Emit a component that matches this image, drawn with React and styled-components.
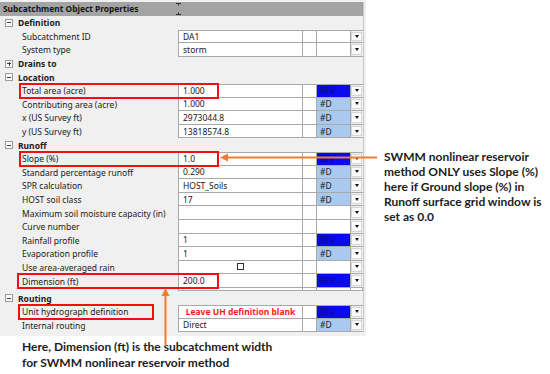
import React from "react";
import styled, { createGlobalStyle } from "styled-components";

const ROW = 13.6;
const LINE = "#a9a9a9";

const GlobalStyle = createGlobalStyle`
  html, body {
    margin: 0;
    padding: 0;
    background: #ffffff;
  }
`;

const Page = styled.div`
  position: relative;
  width: 550px;
  height: 374px;
  overflow: hidden;
  font-family: "Noto Sans", "Open Sans", sans-serif;
  color: #202020;
`;

const Top = styled.div`
  display: flex;
  align-items: flex-start;
`;

const Panel = styled.div`
  width: 366px;
  padding: 2px 0 4px;
  background: #f0f0f0;
  box-sizing: border-box;
`;

const Grid = styled.div`
  width: 364px;
  border-right: 1px solid #c8c8c8;
  box-sizing: border-box;
`;

const Header = styled.div`
  position: relative;
  height: 14px;
  line-height: 14px;
  padding-left: 3px;
  background: #a4a4a4;
  color: #151515;
  font-weight: bold;
  font-size: 8.4px;
`;

const Splitter = styled.svg`
  position: absolute;
  left: 175px;
  top: 0;
`;

const Row = styled.div`
  position: relative;
  display: flex;
  align-items: stretch;
  height: ${(p) => p.$h || ROW}px;
  font-size: 8.5px;
`;

const Label = styled.div`
  display: flex;
  align-items: center;
  width: 178px;
  flex-shrink: 0;
  padding-left: ${(p) => (p.$cat ? 5 : 22)}px;
  box-sizing: border-box;
  font-weight: ${(p) => (p.$cat ? "bold" : "normal")};
  white-space: nowrap;
`;

const Expander = styled.span`
  position: relative;
  display: inline-flex;
  align-items: center;
  justify-content: center;
  width: 8px;
  height: 8px;
  margin-right: 5px;
  box-sizing: border-box;
  border: 1px solid #9c9c9c;
  background: #fafafa;
  &::before {
    content: "";
    position: absolute;
    width: 4px;
    height: 1px;
    background: #404040;
  }
  &::after {
    content: ${(p) => (p.$plus ? '""' : "none")};
    position: absolute;
    width: 1px;
    height: 4px;
    background: #404040;
  }
`;

const Cells = styled.div`
  display: grid;
  grid-template-columns: 124px 14px 34px 12px;
  height: 100%;
  box-sizing: border-box;
  border-left: 1px solid ${LINE};
  border-bottom: 1px solid ${LINE};
  border-top: ${(p) => (p.$first ? `1px solid ${LINE}` : "none")};
`;

const Cell = styled.div`
  display: flex;
  align-items: center;
  justify-content: ${(p) => (p.$center ? "center" : "flex-start")};
  padding-left: ${(p) => (p.$center ? 0 : 4)}px;
  box-sizing: border-box;
  background: #ffffff;
  border-right: 1px solid ${LINE};
  color: ${(p) => (p.$warn ? "#ff1a1a" : "#202020")};
  font-weight: ${(p) => (p.$warn ? "bold" : "normal")};
  white-space: nowrap;
  overflow: hidden;
`;

const flagBg = { REV: "#0a0af0", "#D": "#a9c9ef" };

const Flag = styled(Cell)`
  background: ${(p) => flagBg[p.$kind] || "#ffffff"};
  color: ${(p) => (p.$kind === "REV" ? "#0a0a6e" : "#202020")};
  padding-left: 3px;
`;

const DropButton = styled.div`
  display: flex;
  align-items: center;
  justify-content: center;
  margin: 1px 1px 1px 0;
  background: #fbfbfb;
  box-shadow: inset 0 0 0 1px #d6d6d6;
  &::after {
    content: "";
    border-left: 2.5px solid transparent;
    border-right: 2.5px solid transparent;
    border-top: 3px solid #111111;
  }
`;

const CheckBox = styled.span`
  width: 7px;
  height: 7px;
  box-sizing: border-box;
  border: 1px solid #303030;
  background: #ffffff;
`;

const Highlight = styled.div`
  position: absolute;
  top: -1px;
  bottom: -1px;
  left: ${(p) => p.$left}px;
  width: ${(p) => p.$width}px;
  border: 2px solid #f01010;
  box-sizing: border-box;
  z-index: 2;
  pointer-events: none;
`;

const SideNote = styled.p`
  margin: 149px 0 0 18px;
  font-family: Lato, "Open Sans", sans-serif;
  font-weight: bold;
  font-size: 12px;
  line-height: 15px;
  color: #1c1c1c;
`;

const BottomNote = styled.p`
  margin: 3px 0 0 22px;
  font-family: Lato, "Open Sans", sans-serif;
  font-weight: bold;
  font-size: 12px;
  line-height: 16px;
  color: #1c1c1c;
`;

const Arrows = styled.svg`
  position: absolute;
  left: 0;
  top: 0;
  pointer-events: none;
  z-index: 3;
`;

const sections = [
  {
    title: "Definition",
    rows: [
      { label: "Subcatchment ID", value: "DA1" },
      { label: "System type", value: "storm" },
    ],
  },
  { title: "Drains to", collapsed: true, rows: [] },
  {
    title: "Location",
    rows: [
      { label: "Total area (acre)", value: "1.000", flag: "REV", hl: [19, 200] },
      { label: "Contributing area (acre)", value: "1.000", flag: "#D" },
      { label: "x (US Survey ft)", value: "2973044.8", flag: "#D" },
      { label: "y (US Survey ft)", value: "13818574.8", flag: "#D" },
    ],
  },
  {
    title: "Runoff",
    tail: true,
    rows: [
      { label: "Slope (%)", value: "1.0", flag: "REV", hl: [19, 200] },
      { label: "Standard percentage runoff", value: "0.290", flag: "#D" },
      { label: "SPR calculation", value: "HOST_Soils", flag: "#D" },
      { label: "HOST soil class", value: "17", flag: "#D" },
      { label: "Maximum soil moisture capacity (in)", value: "" },
      { label: "Curve number", value: "" },
      { label: "Rainfall profile", value: "1", flag: "REV" },
      { label: "Evaporation profile", value: "1", flag: "#D" },
      { label: "Use area-averaged rain", check: true },
      { label: "Dimension (ft)", value: "200.0", flag: "REV", hl: [17, 202] },
    ],
  },
  {
    title: "Routing",
    rows: [
      { label: "Unit hydrograph definition", value: "Leave UH definition blank", warn: true, flag: "REV", hl: [18, 136] },
      { label: "Internal routing", value: "Direct", flag: "#D" },
    ],
  },
];

function PropRow({ row, first }) {
  return (
    <Row>
      <Label>{row.label}</Label>
      <Cells $first={first}>
        {row.check ? (
          <Cell $center>
            <CheckBox />
          </Cell>
        ) : (
          <Cell $center={row.warn} $warn={row.warn}>{row.value}</Cell>
        )}
        <Cell />
        <Flag $kind={row.flag}>{row.flag}</Flag>
        <DropButton />
      </Cells>
      {row.hl && <Highlight $left={row.hl[0]} $width={row.hl[1]} />}
    </Row>
  );
}

export default function App() {
  return (
    <Page>
      <GlobalStyle />
      <Top>
        <Panel>
          <Grid>
            <Header>
              Subcatchment Object Properties
              <Splitter width="7" height="14" viewBox="0 0 7 14">
                <path d="M1 1.5h5M3.5 1.5v2M1 12.5h5M3.5 10.5v2" stroke="#333" strokeWidth="1" fill="none" />
              </Splitter>
            </Header>
            {sections.map((s) => (
              <React.Fragment key={s.title}>
                <Row>
                  <Label $cat>
                    <Expander $plus={s.collapsed} />
                    {s.title}
                  </Label>
                </Row>
                {s.rows.map((r, i) => (
                  <PropRow key={r.label} row={r} first={i === 0} />
                ))}
                {s.tail && (
                  <Row $h={3.6}>
                    <Label />
                    <Cells>
                      <Cell />
                      <Cell />
                      <Cell />
                      <Cell />
                    </Cells>
                  </Row>
                )}
              </React.Fragment>
            ))}
          </Grid>
        </Panel>
        <SideNote>
          SWMM nonlinear reservoir
          <br />
          method ONLY uses Slope (%)
          <br />
          here if Ground slope (%) in
          <br />
          Runoff surface grid window is
          <br />
          set as 0.0
        </SideNote>
      </Top>
      <BottomNote>
        Here, Dimension (ft) is the subcatchment width
        <br />
        for SWMM nonlinear reservoir method
      </BottomNote>
      <Arrows width="550" height="374" viewBox="0 0 550 374">
        <g stroke="#ed7d31" strokeWidth="2" fill="#ed7d31">
          <line x1="377" y1="157.5" x2="226" y2="157.5" />
          <path d="M220 157.5 L228 153.5 L228 161.5 Z" stroke="none" />
          <line x1="165.5" y1="346" x2="165.5" y2="294" />
          <path d="M165.5 288 L161.5 296 L169.5 296 Z" stroke="none" />
        </g>
      </Arrows>
    </Page>
  );
}
